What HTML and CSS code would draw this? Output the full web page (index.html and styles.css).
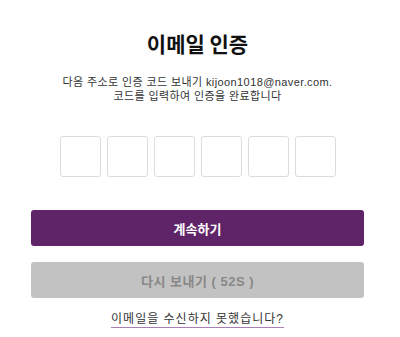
FILE: index.html
```html
<!DOCTYPE html>
<html>
<head>
<title>이메일 인증</title>
<link rel="stylesheet" href="styles.css">
</head>
<body>

<div class="verifyContainer">

<h2 class="title">이메일 인증</h2>

<div class="guide">
다음 주소로 인증 코드 보내기 kijoon1018@naver.com.<br>
코드를 입력하여 인증을 완료합니다
</div>

<div class="codeRow">
<input class="codeBox" type="text" maxlength="1">
<input class="codeBox" type="text" maxlength="1">
<input class="codeBox" type="text" maxlength="1">
<input class="codeBox" type="text" maxlength="1">
<input class="codeBox" type="text" maxlength="1">
<input class="codeBox" type="text" maxlength="1">
</div>

<button class="btn btnPrimary">계속하기</button>
<button class="btn btnDisabled" disabled>다시 보내기 ( 52S )</button>

<div class="helpRow">
<a class="helpLink" href="#">이메일을 수신하지 못했습니다?</a>
</div>

</div>

</body>
</html>
```

FILE: styles.css
```css
body {
    margin: 0;
    background: #fff;
    font-family: "Liberation Sans", "Noto Sans CJK KR", sans-serif;
}
.verifyContainer {
    width: 333px;
    margin-left: 31px;
    padding-top: 31px;
    text-align: center;
}
.title {
    margin: 0;
    font: bold 21px/24px "Noto Sans CJK KR", sans-serif;
    color: #111;
}
.guide {
    margin-top: 20px;
    font-size: 11px;
    line-height: 14px;
    letter-spacing: 0.4px;
    color: #333;
}
.codeRow {
    margin-top: 33px;
    display: flex;
    justify-content: center;
    gap: 6px;
}
.codeBox {
    box-sizing: border-box;
    width: 41px;
    height: 41px;
    margin: 0;
    padding: 0;
    border: 1px solid #dcdcdc;
    border-radius: 3px;
    background: #fff;
    outline: none;
}
.btn {
    display: block;
    box-sizing: border-box;
    width: 100%;
    height: 36px;
    border: none;
    border-radius: 3px;
    font: bold 13px "Noto Sans CJK KR", sans-serif;
}
.btnPrimary {
    margin-top: 33px;
    background: #5f2467;
    color: #fff;
}
.btnDisabled {
    margin-top: 16px;
    background: #c2c2c2;
    color: #888;
    letter-spacing: 0.5px;
    font-family: "Liberation Sans", "Noto Sans CJK KR", sans-serif;
}
.helpRow {
    margin-top: 11px;
}
.helpLink {
    display: inline-block;
    font-size: 12px;
    line-height: 16px;
    letter-spacing: 1px;
    color: #333;
    text-decoration: none;
    border-bottom: 1.5px solid #a97fb4;
}
```
